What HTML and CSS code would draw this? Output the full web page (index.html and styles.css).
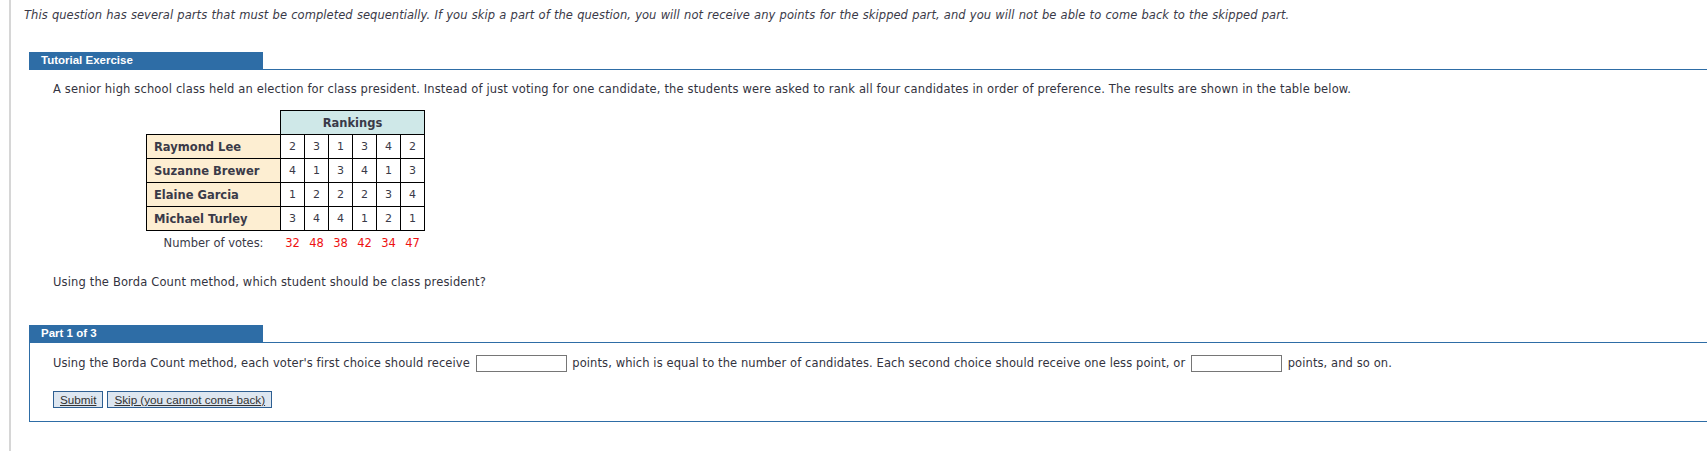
FILE: index.html
```html
<!DOCTYPE html>
<html lang="en">
<head>
<meta charset="utf-8">
<title>Tutorial Exercise</title>
<link rel="stylesheet" href="styles.css">
</head>
<body>
<div class="page">
  <p class="note">This question has several parts that must be completed sequentially. If you skip a part of the question, you will not receive any points for the skipped part, and you will not be able to come back to the skipped part.</p>

  <section class="tutorial">
    <div class="sec-head"><span class="tab">Tutorial Exercise</span></div>
    <div class="tutorial-body">
      <p class="text">A senior high school class held an election for class president. Instead of just voting for one candidate, the students were asked to rank all four candidates in order of preference. The results are shown in the table below.</p>
      <table class="rank">
        <tr>
          <td class="blank"></td>
          <th class="rank-head" colspan="6">Rankings</th>
        </tr>
        <tr><th class="name">Raymond Lee</th><td>2</td><td>3</td><td>1</td><td>3</td><td>4</td><td>2</td></tr>
        <tr><th class="name">Suzanne Brewer</th><td>4</td><td>1</td><td>3</td><td>4</td><td>1</td><td>3</td></tr>
        <tr><th class="name">Elaine Garcia</th><td>1</td><td>2</td><td>2</td><td>2</td><td>3</td><td>4</td></tr>
        <tr><th class="name">Michael Turley</th><td>3</td><td>4</td><td>4</td><td>1</td><td>2</td><td>1</td></tr>
        <tr class="votes">
          <td class="votes-label">Number of votes:</td>
          <td>32</td><td>48</td><td>38</td><td>42</td><td>34</td><td>47</td>
        </tr>
      </table>
      <p class="text question">Using the Borda Count method, which student should be class president?</p>
    </div>
  </section>

  <section class="part">
    <div class="sec-head"><span class="tab">Part 1 of 3</span></div>
    <div class="part-body">
      <p class="text answer-line">Using the Borda Count method, each voter's first choice should receive <input class="blank-input" type="text"> points, which is equal to the number of candidates. Each second choice should receive one less point, or <input class="blank-input" type="text"> points, and so on.</p>
      <div class="actions">
        <button class="btn" type="button">Submit</button>
        <button class="btn" type="button">Skip (you cannot come back)</button>
      </div>
    </div>
  </section>
</div>
</body>
</html>
```

FILE: styles.css
```css
html, body {
  margin: 0;
  padding: 0;
  background: #ffffff;
}

body {
  font-family: "DejaVu Sans", Verdana, sans-serif;
  font-size: 11px;
  color: #333333;
}

.page {
  margin-left: 9px;
  border-left: 2px solid #d6d6d6;
  min-height: 451px;
  box-sizing: border-box;
  padding-top: 8px;
}

.note {
  margin: 0 0 0 13px;
  font-style: italic;
  font-size: 11.5px;
  line-height: 14px;
  color: #3a3a48;
  word-spacing: 0.5px;
  letter-spacing: 0.05px;
}

.sec-head {
  display: flex;
  border-bottom: 1px solid #2e6da6;
}

.tab {
  display: block;
  width: 222px;
  height: 17px;
  padding-left: 12px;
  background: #2e6da6;
  color: #ffffff;
  font-family: "Liberation Sans", Arial, sans-serif;
  font-weight: bold;
  font-size: 11.5px;
  line-height: 17px;
}

.tutorial {
  margin: 30px 0 0 18px;
}

.tutorial-body {
  padding: 12px 0 0 24px;
}

.text {
  margin: 0;
  font-size: 11.5px;
  letter-spacing: 0.15px;
  line-height: 14px;
  color: #333340;
}

.rank {
  border-collapse: collapse;
  margin: 14px 0 0 93px;
  color: #3a3a48;
}

.rank td,
.rank th {
  padding: 0;
  height: 23px;
  text-align: center;
  font-size: 11px;
}

.rank td {
  width: 23px;
  border: 1px solid #000000;
  font-weight: normal;
}

.rank .blank {
  border: none;
  border-bottom: 1px solid #000000;
}

.rank .rank-head {
  background: #cfe8e8;
  border: 1px solid #000000;
  font-weight: bold;
  font-size: 11.5px;
}

.rank .name {
  width: 126px;
  padding-left: 7px;
  text-align: left;
  background: #fdeed2;
  border: 1px solid #000000;
  font-weight: bold;
  font-size: 11.5px;
  white-space: nowrap;
}

.rank .votes td {
  border: none;
  height: 24px;
  font-size: 11.5px;
  color: #ee1111;
}

.rank .votes .votes-label {
  text-align: right;
  padding-right: 17px;
  color: #3a3a48;
}

.question {
  margin-top: 20px;
}

.part {
  margin: 36px 0 0 18px;
}

.part-body {
  border-left: 1px solid #2e6da6;
  border-bottom: 1px solid #2e6da6;
  padding: 12px 0 13px 23px;
}

.answer-line {
  line-height: 17px;
  letter-spacing: 0.09px;
}

.blank-input {
  box-sizing: border-box;
  width: 91px;
  height: 17px;
  margin: 0 2px;
  padding: 0;
  border: 1px solid #767676;
  vertical-align: top;
  font: inherit;
}

.actions {
  display: flex;
  gap: 4px;
  margin-top: 19px;
}

.btn {
  box-sizing: border-box;
  height: 17px;
  padding: 0 6px;
  background: #dde6f0;
  border: 1px solid #2e5f92;
  border-radius: 0;
  font-family: "Liberation Sans", Arial, sans-serif;
  font-size: 11.7px;
  line-height: 15px;
  color: #333333;
  text-decoration: underline;
}
```
